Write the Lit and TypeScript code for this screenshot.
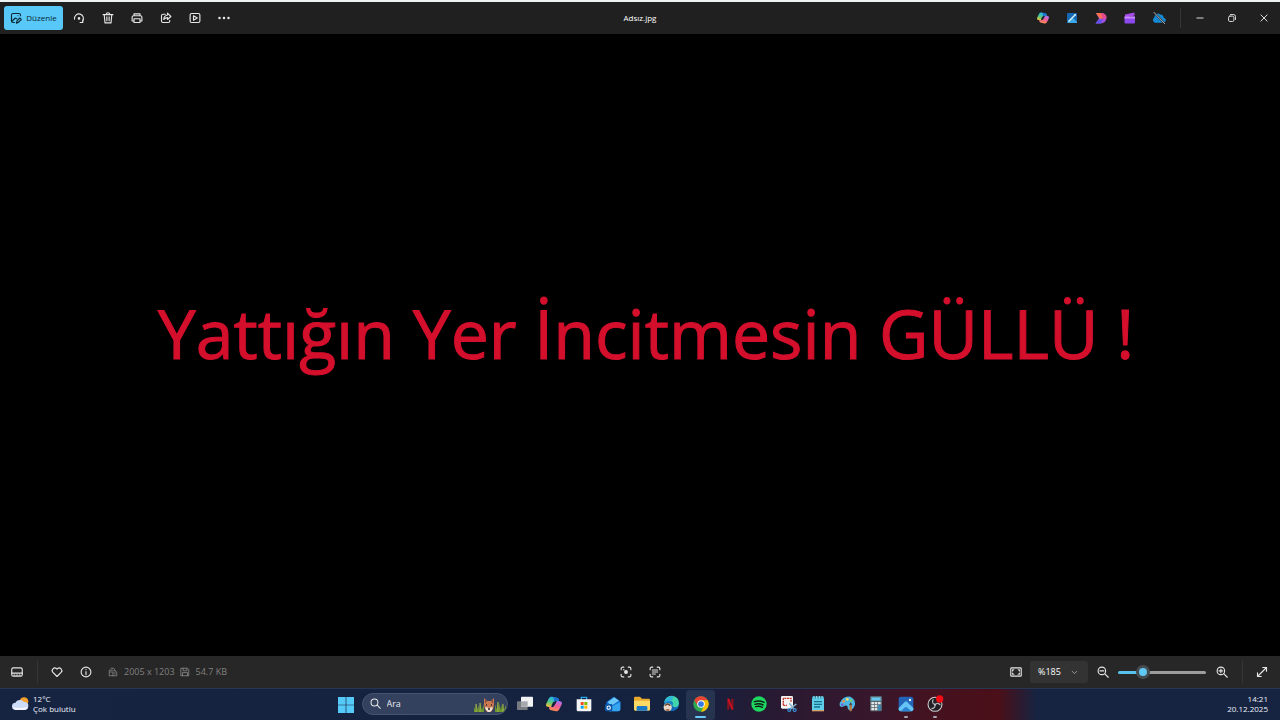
import { LitElement, html, css, svg } from "lit";
import { customElement, state } from "lit/decorators.js";

const line = (body: unknown, size = 12) => html`<svg class="line" width=${size} height=${size} viewBox="0 0 16 16" aria-hidden="true">${body}</svg>`;
const art = (body: unknown, size = 16) => html`<svg width=${size} height=${size} viewBox="0 0 24 24" aria-hidden="true">${body}</svg>`;

const copilot = svg`
  <defs>
    <linearGradient id="cpa" x1="0" y1="0" x2="0" y2="1"><stop offset="0" stop-color="#25b3f2"/><stop offset=".5" stop-color="#4fc78a"/><stop offset="1" stop-color="#f4c430"/></linearGradient>
    <linearGradient id="cpb" x1="0" y1="0" x2="0" y2="1"><stop offset="0" stop-color="#a277f5"/><stop offset=".5" stop-color="#ee5b9a"/><stop offset="1" stop-color="#f98a50"/></linearGradient>
  </defs>
  <g transform="rotate(12 12 12)">
    <path d="M7 2h7c2.500 0 3.500 1 4 3l.5 2h-4c-2 0-2.800 1-3.400 3l-2 6c-.5 1.500-1 2-2.500 2H4c-3 0-4-2-3.400-4.500l2-8C3.500 3 5 2 7 2z" fill="url(#cpa)"/>
    <path d="M17 22h-7c-2.500 0-3.500-1-4-3l-.5-2h4c2 0 2.800-1 3.400-3l2-6c.5-1.500 1-2 2.500-2H20c3 0 4 2 3.400 4.500l-2 8C20.500 21 19 22 17 22z" fill="url(#cpb)"/>
    <path d="M9 2h5c2.500 0 3.500 1 4 3l.4 1.500h-3.500c-1.800 0-2.600.8-3.200 2.500z" fill="#1b6fd0"/>
    <path d="M10.500 9h4l-2 6h-4z" fill="#1b2439"/>
  </g>`;

const photo = svg`
  <rect x="1" y="1" width="22" height="22" rx="3" fill="#2364b8"/>
  <path d="M1 18 10.500 8.500q1.500-1.300 3 0L23 18v2a3 3 0 0 1-3 3H4a3 3 0 0 1-3-3z" fill="#64c4f5"/>
  <path d="m4 23 6.500-6q1.500-1.200 3 0l6.500 6z" fill="#2d83d2"/>
  <circle cx="18" cy="6" r="1.800" fill="#e5f7ff"/>`;

const icons = {
  edit: svg`<path d="M6 14H4a2 2 0 0 1-2-2V4a2 2 0 0 1 2-2h8a2 2 0 0 1 2 2v1M3 12l4-4 2 1M10.500 5h.1M8.500 15l1-3.500L13 8l2 2-3.500 3.500z"/>`,
  rotate: svg`<path d="M2 9.500A6 6 0 1 1 12.500 12.500M9.500 14h3.500v-3.500"/><circle cx="8" cy="8.500" r="1" fill="currentColor"/>`,
  trash: svg`<path d="M1.500 3.500h13M5.500 3.500a2.500 2.500 0 0 1 5 0M3 4l1 10.500h8L13 4M6.500 6.500v5M9.500 6.500v5"/>`,
  print: svg`<path d="M4 5V2.500h8V5M4 12H1.500V7a2 2 0 0 1 2-2h9a2 2 0 0 1 2 2v5H12M4 9h8v5H4z"/>`,
  share: svg`<path d="M7 3H4a2 2 0 0 0-2 2v7a2 2 0 0 0 2 2h7a2 2 0 0 0 2-2v-1M10 1.500 14.500 6 10 10V7.500q-3 0-5 2.500 0-5 5-6z"/>`,
  play: svg`<rect x="1.500" y="2" width="13" height="12" rx="2"/><path d="m6 5 5 3-5 3z"/>`,
  more: svg`<g fill="currentColor" stroke="none"><circle cx="2" cy="8" r="1.700"/><circle cx="8" cy="8" r="1.700"/><circle cx="14" cy="8" r="1.700"/></g>`,
  strip: svg`<rect x="1" y="2.500" width="14" height="11" rx="2"/><path d="M1 9.500h14M4 12h1M7.500 12h1M11 12h1"/>`,
  heart: svg`<path d="M8 14 2.300 8.300A3.500 3.500 0 0 1 7.200 3.400L8 4.200l.8-.8a3.500 3.500 0 0 1 4.900 4.900z"/>`,
  info: svg`<circle cx="8" cy="8" r="6.500"/><path d="M8 7.500v4M8 4.500v.3"/>`,
  size: svg`<path d="M2 13V5h5M5 2h4l2 3M4 8h4v6H2M9 6h3l2 3v5H8M11 9v2"/>`,
  disk: svg`<path d="M2 2h10l2 2v10H2zM5 2v4h6V2M4 14V9h8v5"/>`,
  focus: svg`<path d="M1.500 5V3.500a2 2 0 0 1 2-2H5M11 1.500h1.500a2 2 0 0 1 2 2V5M14.500 11v1.500a2 2 0 0 1-2 2H11M5 14.500H3.500a2 2 0 0 1-2-2V11M4.500 5h1"/><circle cx="8" cy="8" r="1.800" fill="currentColor"/>`,
  scan: svg`<path d="M1.500 5V3.500a2 2 0 0 1 2-2H5M11 1.500h1.500a2 2 0 0 1 2 2V5M14.500 11v1.500a2 2 0 0 1-2 2H11M5 14.500H3.500a2 2 0 0 1-2-2V11M4.500 5.300h7M4.500 8h7M4.500 10.700h4"/>`,
  fit: svg`<rect x="1" y="2.500" width="14" height="11" rx="1"/><path d="M3.500 6.500v-1.500h1.500M11 5h1.500v1.500M12.500 9.500V11H11M5 11H3.500V9.500"/>`,
  minus: svg`<circle cx="6.500" cy="6.500" r="5"/><path d="m10.500 10.500 4.500 4.500M4 6.500h5"/>`,
  plus: svg`<circle cx="6.500" cy="6.500" r="5"/><path d="m10.500 10.500 4.500 4.500M4 6.500h5M6.500 4v5"/>`,
  expand: svg`<path d="m2 14 12-12M9 2h5v5M2 9v5h5"/>`,
  search: svg`<circle cx="6.500" cy="6.500" r="5"/><path d="m10.500 10.500 4.500 4.500"/>`,
  min: svg`<path d="M3 8h10"/>`,
  restore: svg`<rect x="2.500" y="5" width="8.500" height="8.500" rx="2"/><path d="M5.500 2.500h5a3 3 0 0 1 3 3v5"/>`,
  close: svg`<path d="m3 3 10 10M13 3 3 13"/>`,
};

const apps: Array<{ name: string; art: unknown; mark?: string }> = [
  { name: "Görev görünümü", art: svg`<rect x="0" y="8" width="16" height="13" rx="1" fill="#777a80"/><rect x="6" y="1" width="18" height="15" rx="1" fill="#f1f2f4"/><path d="M6 8h10v8H6z" fill="#a6a8ad"/>` },
  { name: "Copilot", art: copilot },
  { name: "Microsoft Store", art: svg`<path d="M8 6V2h8v4" fill="none" stroke="#2aa8e8" stroke-width="2"/><path d="M1 5h22v16a2 2 0 0 1-2 2H3a2 2 0 0 1-2-2z" fill="#f4f5f7"/><path d="M7 9h4.500v4.500H7z" fill="#f25022"/><path d="M12.500 9H17v4.500h-4.500z" fill="#7fba00"/><path d="M7 14.500h4.500V19H7z" fill="#00a4ef"/><path d="M12.500 14.500H17V19h-4.500z" fill="#ffb900"/>` },
  { name: "Outlook", art: svg`<path d="M2 9 13 1l10 7v12a3 3 0 0 1-3 3H6a4 4 0 0 1-4-3z" fill="#1269cf"/><path d="M4 9 14 2l7 5-12 8z" fill="#6ac8f8"/><path d="m5 18 18-9v11a3 3 0 0 1-3 3H7z" fill="#35a5ef"/><rect x="0" y="12" width="11" height="11" rx="2" fill="#0d57a8"/><circle cx="5.500" cy="17.500" r="2.500" fill="none" stroke="#fff" stroke-width="1.600"/>` },
  { name: "Dosya Gezgini", art: svg`<path d="M0 3a2 2 0 0 1 2-2h7l3 3h10a2 2 0 0 1 2 2v15H0z" fill="#e9a92c"/><path d="M0 7h24v13a2 2 0 0 1-2 2H2a2 2 0 0 1-2-2z" fill="#ffd965"/><path d="M4 22v-5a2 2 0 0 1 2-2h12a2 2 0 0 1 2 2v5z" fill="#1878c9"/>` },
  { name: "Microsoft Edge", art: svg`<circle cx="13" cy="11.500" r="11" fill="#1683c4"/><path d="M2 10A11 11 0 0 1 24 11q-1 6-7 6-3-1-3-3 3-3-1-6-6-3-11 2z" fill="#42d4aa"/><path d="M2 10A11 11 0 0 1 16 1q-3 6-6 7-5 0-8 2" fill="#2eb3dd"/><path d="M14 14q0 3 8 4-4 5-10 5z" fill="#1267b5"/><circle cx="7" cy="17" r="6" fill="#ead8c4"/><path d="M2 14q5-6 10 0l-2 1-3-2-4 2z" fill="#65422f"/><path d="M3.500 21q3.500-3 7 0-3.500 3-7 0" fill="#9b6449"/>` },
  { name: "Google Chrome", mark: "active", art: svg`<circle cx="12" cy="12" r="11.500" fill="#2da94f"/><path d="M2 6.300A11.500 11.500 0 0 1 22 6.300H12L7.200 14.800z" fill="#ea4335"/><path d="M22 6.300A11.500 11.500 0 0 1 12 23.500l4.800-8.700L12 6.300z" fill="#fbbc05"/><circle cx="12" cy="12" r="5.700" fill="#fff"/><circle cx="12" cy="12" r="4.300" fill="#3478e5"/>` },
  { name: "Netflix", art: svg`<path d="M8 4h3v16l-3 1z" fill="#96101b"/><path d="M14 4h3v17l-3-1z" fill="#96101b"/><path d="M8 4h3l6 17-3-1z" fill="#d3121f"/>` },
  { name: "Spotify", art: svg`<circle cx="12" cy="12" r="11.500" fill="#1ed760"/><path d="M5 8.500q8-2.500 14.500 1M6 12.500q6.500-2 12 1M7 16q5.500-1.500 10 1" fill="none" stroke="#102017" stroke-width="2.200" stroke-linecap="round"/>` },
  { name: "Ekran Alıntısı Aracı", art: svg`<rect x="0" y="0" width="18" height="19" rx="2" fill="#f3f3f3"/><path d="M3.500 14V3.500H15V9M3.500 14H9" fill="none" stroke="#c83228" stroke-width="2" stroke-dasharray="3 1"/><path d="m12.500 11 7 8.500M23 12l-9 7" stroke="#86b2cf" stroke-width="2.200"/><circle cx="12.500" cy="21" r="2.200" fill="none" stroke="#3a96dc" stroke-width="1.800"/><circle cx="20.500" cy="21" r="2.200" fill="none" stroke="#3a96dc" stroke-width="1.800"/>` },
  { name: "Not Defteri", art: svg`<rect x="3" y="1" width="18" height="21" rx="2" fill="#5fcfe9"/><path d="M3 1h18v3H3z" fill="#2da1c1"/><path d="M6 0v4M10 0v4M14 0v4M18 0v4" stroke="#a8e5f2" stroke-width="1.500"/><path d="M3 21h18v2H3z" fill="#d9a06a"/><path d="M6 8.500h12M6 12.500h12M6 16.500h9" stroke="#16718d" stroke-width="2"/>` },
  { name: "Paint", art: svg`<path d="M1 11Q6-1 17 1q8 4 7 12-3 9-9 8-3-2-2-5-2-3-5-1-8 4-7-4z" fill="#4cb6e5"/><circle cx="7" cy="8" r="2" fill="#ef8f42"/><circle cx="12.500" cy="5" r="2" fill="#ffdc58"/><circle cx="18" cy="7" r="2" fill="#6bd26b"/><circle cx="5" cy="13" r="1.800" fill="#8751d0"/><path d="M15.500 14h4l-.5 9h-3z" fill="#b97841"/><path d="m15 14 2.500-5 2.500 5z" fill="#544136"/>` },
  { name: "Hesap Makinesi", art: svg`<rect x="3" y="0" width="18" height="23" rx="2" fill="#59656e"/><rect x="5" y="2" width="14" height="5" fill="#68c9ed"/><path d="M5 9h4v3.500H5zM10 9h4v3.500h-4zM15 9h4v3.500h-4zM5 13.500h4V17H5zM10 13.500h4V17h-4zM5 18h4v3.500H5zM10 18h4v3.500h-4z" fill="#e2e5e8"/><path d="M15 13.500h4v8h-4z" fill="#368cbb"/>` },
  { name: "Fotoğraflar", mark: "open", art: photo },
  { name: "OBS Studio", mark: "open", art: svg`<circle cx="12" cy="12.500" r="10.500" fill="#211f24" stroke="#cfcfd2" stroke-width="1.600"/><path d="M11 12.500Q6.500 10 9.500 5M13 12q4.500-2.500 7 2M12 14q0 5-5.500 5" fill="none" stroke="#b4b2b7" stroke-width="1.800"/><circle cx="12" cy="13" r="1.600" fill="#c4c2c7"/><circle cx="19" cy="4.500" r="5.500" fill="#f00d16"/>` },
];

@customElement("app-root")
export class AppRoot extends LitElement {
  @state() private zoom = 24;

  static styles = css`
    :host { display: grid; grid-template-rows: 34px 1fr 32px 32px; min-height: 100vh; background: #000; color: #e6e6e6; font: 8px/12px "Open Sans", "Noto Sans", sans-serif; }
    * { box-sizing: border-box; }
    button { border: 0; padding: 0; background: none; color: inherit; font: inherit; display: flex; align-items: center; justify-content: center; }
    svg { display: block; flex: none; overflow: visible; }
    .line { fill: none; stroke: currentColor; stroke-width: 1.500; stroke-linecap: round; stroke-linejoin: round; }
    .title { display: grid; grid-template-columns: 1fr auto 1fr; align-items: center; background: #202020; border-top: 2px solid #eef2f3; }
    .title h1 { margin: 0; font-size: 8px; font-weight: 400; color: #fff; }
    .group { display: flex; align-items: center; }
    .end { justify-content: flex-end; }
    .edit { width: 59px; height: 24px; margin: 0 1px 0 4px; gap: 4px; border-radius: 3px; background: #58c8f8; color: #0b2633; }
    .tool { width: 29px; height: 28px; }
    .window { width: 32px; height: 28px; }
    .rule { width: 1px; height: 24px; background: #353535; }
    .title .rule { margin: 0 3px 0 7px; height: 20px; }
    .viewer { display: flex; align-items: center; justify-content: center; }
    .viewer p { margin: 0; color: #d40f2c; -webkit-text-stroke: 1px #d40f2c; font: 400 68px/90px "Open Sans", sans-serif; white-space: nowrap; padding: 0 0 24px 12px; }
    .status { display: grid; grid-template-columns: 1fr auto 1fr; background: #272727; }
    .status .first { width: 34px; margin-right: 3px; }
    .status .like { margin-left: 4px; }
    .meta { display: flex; align-items: center; gap: 6px; color: #808080; font-size: 9px; margin-left: 8px; }
    .meta + .meta { margin-left: 5px; }
    .picker { position: relative; display: flex; align-items: center; width: 58px; height: 22px; }
    .picker select { appearance: none; width: 100%; height: 100%; padding: 0 8px; border: 0; border-radius: 3px; background: #333; color: #fff; font: 9px/12px "Open Sans", sans-serif; }
    .picker svg { position: absolute; right: 9px; color: #aaa; pointer-events: none; }
    .range { appearance: none; width: 88px; height: 14px; margin: 0 1px; background: none; }
    .range::-webkit-slider-runnable-track { height: 3px; border-radius: 2px; background: linear-gradient(90deg, #58c2ec 27%, #9c9c9c 27%); }
    .range::-webkit-slider-thumb { appearance: none; width: 14px; height: 14px; margin-top: -6px; border-radius: 50%; border: 3px solid #454b4e; background: #60c8f3; }
    .status .last { width: 37px; }
    .status .end .rule { margin-left: 6px; }
    .task { display: grid; grid-template-columns: 1fr auto 1fr; background: linear-gradient(90deg, #162442 0%, #14213f 54%, #271a33 60%, #37172c 68%, #45121f 73%, #4a0f18 78%, #162442 81%, #162442 100%); border-top: 1px solid #263653; }
    .weather { gap: 4px; padding-left: 12px; }
    .weather > span, .clock { display: grid; line-height: 10px; color: #edf2fa; }
    .weather > span, .clock, .weather svg { margin-bottom: 2px; }
    .clock { text-align: right; align-content: center; justify-self: end; padding-right: 12px; }
    .start { width: 30px; height: 30px; }
    .search { display: flex; align-items: center; width: 146px; height: 22px; gap: 6px; padding-left: 7px; border: 1px solid #47536d; border-radius: 11px; background: #33415e; margin: 0 3px 2px 1px; overflow: hidden; }
    .search input { flex: 1; min-width: 0; padding: 0; border: 0; outline: 0; background: none; color: #fff; font: 9px/12px "Open Sans", sans-serif; }
    .search input::placeholder { color: #e4e8f0; opacity: 1; }
    .apps { display: grid; grid-template-columns: repeat(15, 1fr); width: 439px; }
    .app { position: relative; height: 30px; padding-bottom: 1px; border-radius: 3px; }
    .app.active { background: #26344f; }
    .app.active::after, .app.open::after { content: ""; position: absolute; bottom: 2px; width: 4px; height: 2px; border-radius: 1px; background: #a7a3b2; }
    .app.active::after { width: 11px; background: #68c9f4; }
  `;

  private tool(label: string, body: unknown, cls = "tool", size = 12) {
    return html`<button class=${cls} aria-label=${label}>${line(body, size)}</button>`;
  }

  render() {
    return html`
      <header class="title">
        <div class="group">
          <button class="edit">${line(icons.edit)}<span>Düzenle</span></button>
          ${this.tool("Döndür", icons.rotate)}${this.tool("Sil", icons.trash)}${this.tool("Yazdır", icons.print)}
          ${this.tool("Paylaş", icons.share)}${this.tool("Slayt gösterisi", icons.play)}${this.tool("Diğer", icons.more)}
        </div>
        <h1>Adsız.jpg</h1>
        <div class="group end">
          <button class="tool" aria-label="Copilot">${art(copilot, 12)}</button>
          <button class="tool" aria-label="Fotoğraf düzenleyici">${art(svg`<rect x="2" y="2" width="20" height="20" rx="2" fill="#1768b4"/><path d="m2 22 11-11 9 9v2z" fill="#3da9e9"/><path d="m5 19 12-12" stroke="#d8f3ff" stroke-width="3"/><circle cx="18" cy="6" r="2" fill="#dff"/>`, 12)}</button>
          <button class="tool" aria-label="Designer">${art(svg`<path d="M2 2h9q12 0 12 10-1 10-12 11H1l7-10z" fill="#a04fe0"/><path d="M2 2h9q10 0 12 9-8 3-14 2z" fill="#fb704d"/><path d="M11 2q11 1 12 10-5 3-9 1 1-6-3-11" fill="#e64791"/><path d="M1 23q5-9 14-8l-3 8z" fill="#5d53e6"/>`, 12)}</button>
          <button class="tool" aria-label="Clipchamp">${art(svg`<path d="m2 5 19-4v6L2 11z" fill="#a84bea"/><rect x="1" y="9" width="21" height="14" rx="2" fill="#8c48ed"/><path d="M1 9h21v4H1z" fill="#ca8aff"/>`, 12)}</button>
          <button class="tool" aria-label="OneDrive">${art(svg`<path d="M5 20a5 5 0 0 1-1-9 6 6 0 0 1 10-5 6 6 0 0 1 6 5q5 2 3 7-1 2-4 2z" fill="#1689d5"/><path d="m3 2 19 20" stroke="#202020" stroke-width="3"/><path d="m3 2 19 20" stroke="#ccd4d9" stroke-width="1.500"/>`, 14)}</button>
          <span class="rule"></span>
          ${this.tool("Simge durumuna küçült", icons.min, "window", 10)}${this.tool("Geri yükle", icons.restore, "window", 10)}${this.tool("Kapat", icons.close, "window", 10)}
        </div>
      </header>
      <main class="viewer"><p>Yattığın Yer İncitmesin GÜLLÜ !</p></main>
      <section class="status" aria-label="Görüntü bilgileri">
        <div class="group">
          ${this.tool("Film şeridi", icons.strip, "first")}<span class="rule"></span>
          ${this.tool("Sık kullanılanlara ekle", icons.heart, "tool like")}${this.tool("Bilgi", icons.info)}
          <span class="meta">${line(icons.size, 10)}2005 x 1203</span>
          <span class="meta">${line(icons.disk, 10)}54.7 KB</span>
        </div>
        <div class="group">${this.tool("Görsel arama", icons.focus)}${this.tool("Metni tara", icons.scan)}</div>
        <div class="group end">
          ${this.tool("Sığdır", icons.fit)}
          <div class="picker"><select aria-label="Yakınlaştırma"><option>%185</option></select>${line(svg`<path d="m4 6 4 4 4-4"/>`, 9)}</div>
          ${this.tool("Uzaklaştır", icons.minus)}
          <input class="range" type="range" aria-label="Yakınlaştırma düzeyi" .value=${String(this.zoom)} @input=${(e: Event) => (this.zoom = Number((e.target as HTMLInputElement).value))} />
          ${this.tool("Yakınlaştır", icons.plus)}<span class="rule"></span>${this.tool("Tam ekran", icons.expand, "last")}
        </div>
      </section>
      <footer class="task">
        <div class="group weather">${art(svg`<circle cx="17" cy="9" r="6" fill="#f5a12e"/><path d="M5 21a5 5 0 0 1 0-10 7 7 0 0 1 12-1 5 5 0 0 1 6 6q0 5-5 5z" fill="#cddcf8"/><path d="M1 17q8 3 21 0-1 4-5 4H5q-3 0-4-4" fill="#f3f6ff"/>`, 17)}<span><span>12°C</span><span>Çok bulutlu</span></span></div>
        <div class="group">
          <button class="start" aria-label="Başlat">${art(svg`<path d="M0 0h11.500v11.500H0zM12.500 0H24v11.500H12.500zM0 12.500h11.500V24H0zM12.500 12.500H24V24H12.500z" fill="#55c9f8"/>`)}</button>
          <label class="search">${line(icons.search, 11)}<input type="text" aria-label="Ara" placeholder="Ara" />
            <svg width="34" height="20" viewBox="0 0 34 20" aria-hidden="true">
              <path d="M1 18V13l2 4V9l2 7v-5l2 6V8l2 8 2-6v8zM22 18V10l2 6V7l2 9v-7l2 7 1-6 2 6 2-5v7z" fill="#6c942f"/>
              <path d="M3 18V10M7 18V9M25 18V8M30 18V10" stroke="#a8b847"/>
              <path d="M11 4l3 3h4l3-3v7l-1 4-2 3h-4l-2-3-1-4z" fill="#cb7950"/><path d="m12 6 1.500 1.500-1 2zM20 6l-1.500 1.500 1 2z" fill="#5b3030"/>
              <path d="m12 13 4 1 4-1-1 3-2 2h-2l-2-2z" fill="#eee2d6"/><path d="M13 11h1M18 11h1M15 15h2" stroke="#291d20" stroke-width="1.500"/>
            </svg>
          </label>
          <div class="apps">${apps.map((a) => html`<button class="app ${a.mark ?? ""}" aria-label=${a.name}>${art(a.art)}</button>`)}</div>
        </div>
        <div class="clock"><time>14:21</time><time>20.12.2025</time></div>
      </footer>`;
  }
}
